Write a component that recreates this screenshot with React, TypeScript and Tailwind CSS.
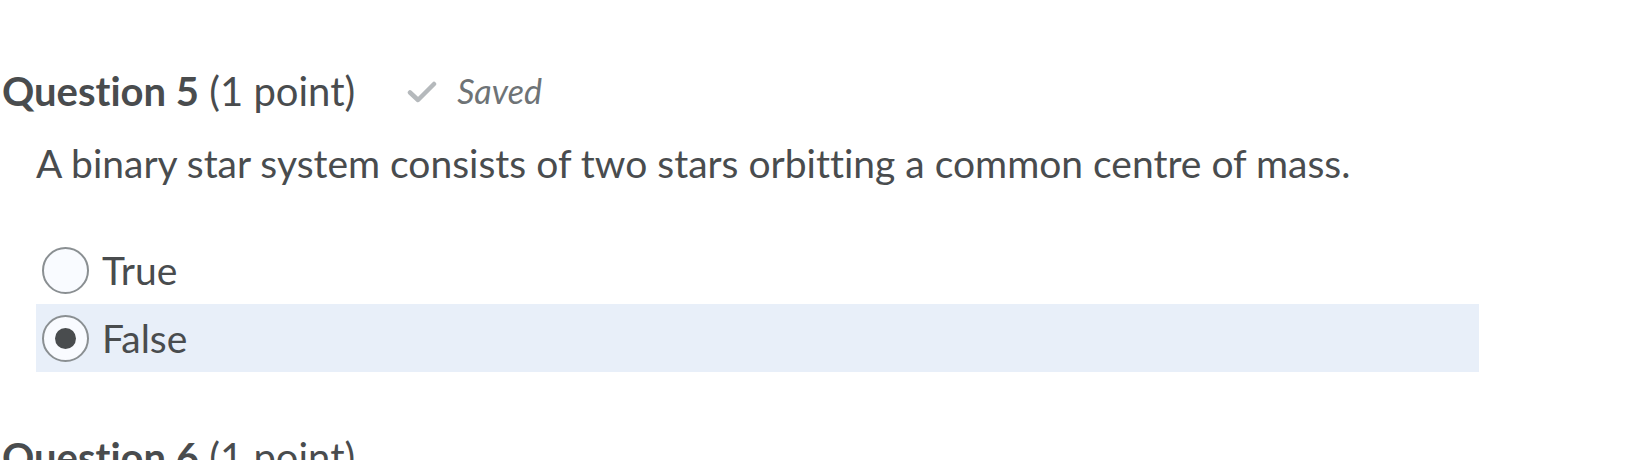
const options = [
  { label: "True", checked: false },
  { label: "False", checked: true },
]

function Radio({ checked }: { checked: boolean }) {
  return (
    <span className="flex h-[47px] w-[47px] shrink-0 items-center justify-center rounded-full border-2 border-[#8a8f92] bg-[#f9fbff]">
      {checked && <span className="h-[21px] w-[21px] rounded-full bg-[#494c4e]" />}
    </span>
  )
}

export default function App() {
  return (
    <div className="min-h-[460px] w-full overflow-hidden bg-white font-['Lato',sans-serif] text-[#494c4e] [font-variant-ligatures:none]">
      <div className="pt-[65px]">
        <div className="flex items-center">
          <h2 className="pl-[2px] text-[40px] leading-[46px]">
            <span className="font-bold">Question 5</span> (1 point)
          </h2>
          <span className="ml-[52px] flex items-center gap-[20px] text-[34px] italic text-[#6e7376]">
            <svg width="30" height="24" viewBox="0 0 30 24" fill="none" className="mt-[2px]">
              <path d="M3 12.5 L11 20 L27 4" stroke="#b5b9bc" strokeWidth="4.5" strokeLinecap="round" strokeLinejoin="round" />
            </svg>
            Saved
          </span>
        </div>

        <p className="mt-[23px] pl-[36px] text-[39px] leading-[48px]">
          A binary star system consists of two stars orbitting a common centre of mass.
        </p>

        <div className="mt-[49px] w-[1479px] pl-[36px]">
          {options.map((o) => (
            <label
              key={o.label}
              className={`flex h-[68px] items-center gap-[13px] pl-[6px] text-[39px] ${
                o.checked ? "bg-[#e8eff9]" : ""
              }`}
            >
              <Radio checked={o.checked} />
              {o.label}
            </label>
          ))}
        </div>

        <h2 className="mt-[62px] pl-[2px] text-[40px] leading-[46px]">
          <span className="font-bold">Question 6</span> (1 point)
        </h2>
      </div>
    </div>
  )
}
